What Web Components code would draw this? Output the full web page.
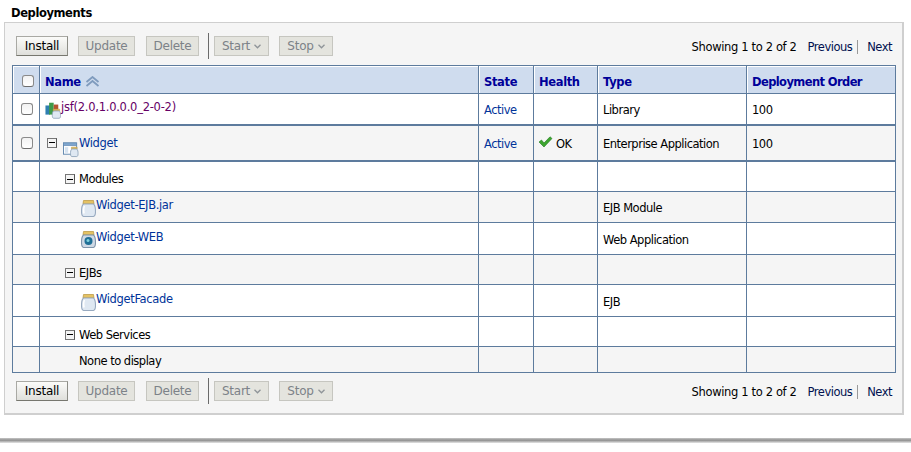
<!DOCTYPE html>
<html>
<head>
<meta charset="utf-8">
<style>
html, body { margin: 0; padding: 0; background: #fff; }
body { font: 12px "DejaVu Sans", sans-serif; color: #000; width: 911px; height: 452px; overflow: hidden; }
</style>
</head>
<body>
<deploy-page></deploy-page>

<script>
const JAR_LID = `<path d="M3 6.500 L3.500 3 H13.500 L14 6.500 Z" fill="#e4c264" stroke="#b8923a" stroke-width=".7"/>`;
const JAR_BODY = `M3.500 6.500 H13.500 C15.500 8 15.500 10 15.500 14 C15.500 17.500 14.500 19 13 19 H4 C2.500 19 1.500 17.500 1.500 14 C1.500 10 1.500 8 3.500 6.500 Z`;
const ICONS = {
    jar: `<svg width="15" height="17" viewBox="1 2.500 15 17">${JAR_LID}<path d="${JAR_BODY}" fill="#dfe8f2" stroke="#98aac0" stroke-width="1.100"/><path d="M4.500 8.500 C3.500 10 3.500 13 4 16" fill="none" stroke="#fff" stroke-width="1.600"/></svg>`,
    web: `<svg width="15" height="17" viewBox="1 2.500 15 17">${JAR_LID}<path d="${JAR_BODY}" fill="#cfd9e5" stroke="#7f94ab" stroke-width="1.100"/><circle cx="8.500" cy="12.500" r="4" fill="#1f6f96"/><circle cx="8" cy="12" r="1.500" fill="#7fd0dd"/></svg>`,
    lib: `<svg width="16" height="17" viewBox="0.500 3.500 17.500 18"><rect x="1" y="7" width="5" height="10" fill="#2f7fb0"/><rect x="5" y="4" width="5" height="13" fill="#3f9a4a"/><rect x="10" y="6" width="5" height="11" fill="#b5532f"/><path d="M9.500 11 H16.500 V13 H9.500 Z" fill="#e4c264" stroke="#b8923a" stroke-width=".5"/><path d="M10 13 H16 C17.500 14 17.500 16 17.500 18 C17.500 20 17 21 16 21 H10 C9 21 8.500 20 8.500 18 C8.500 16 8.500 14 10 13 Z" fill="#dfe8f2" stroke="#8da2b8" stroke-width=".9"/></svg>`,
    app: `<svg width="16" height="17" viewBox="1 4 17 17"><rect x="1.500" y="5.500" width="14" height="12" fill="#fff" stroke="#5f86ae"/><rect x="1.500" y="5.500" width="14" height="3" fill="#7fa6cf" stroke="#5f86ae" stroke-width=".6"/><rect x="3" y="10" width="3.500" height="6" fill="#d6e3f0"/><path d="M10 10 H16 V12 H10 Z" fill="#e4c264" stroke="#b8923a" stroke-width=".5"/><path d="M10.500 12 H15.500 C17 13 17 15 17 17 C17 19 16.500 20 15.500 20 H10.500 C9.500 20 9 19 9 17 C9 15 9 13 10.500 12 Z" fill="#dfe8f2" stroke="#8da2b8" stroke-width=".9"/></svg>`
};

class DeployButton extends HTMLElement {
    constructor() {
        super();
        this.attachShadow({ mode: 'open' });
    }
    connectedCallback() {
        const menu = this.hasAttribute('menu');
        this.shadowRoot.innerHTML = `
            <style>
                :host { display: inline-flex; }
                button {
                    box-sizing: border-box;
                    height: 20px;
                    width: ${this.getAttribute('width')}px;
                    padding: 0;
                    font: 12px "DejaVu Sans", sans-serif;
                    letter-spacing: -0.25px;
                    display: flex;
                    align-items: center;
                    justify-content: center;
                    gap: 4px;
                    color: #000;
                    background: linear-gradient(180deg, #fbfbf9 0%, #dfdfdb 100%);
                    border: 1px solid #a9a9a4;
                    border-bottom: 1px solid #77776f;
                    border-right-color: #8d8d86;
                }
                :host([disabled]) button {
                    color: #7c8288;
                    background: #e4e4de;
                    border: 1px solid #c6c6c0;
                }
            </style>
            <button type="button"><slot></slot>${menu ? `<svg width="7" height="5" viewBox="0 0 7 5"><path d="M.5 .8 L3.500 3.800 L6.500 .8" fill="none" stroke="#8f9498" stroke-width="1.300"/></svg>` : ''}</button>
        `;
    }
}

class DeployToolbar extends HTMLElement {
    constructor() {
        super();
        this.attachShadow({ mode: 'open' });
    }
    connectedCallback() {
        this.shadowRoot.innerHTML = `
            <style>
                :host { display: flex; align-items: center; height: 26px; }
                .buttons { display: flex; align-items: center; }
                deploy-button { margin-right: 10px; }
                .wide { margin-right: 11px; }
                .last { margin-right: 9px; }
                .sep { width: 1px; height: 26px; background: #6b6b6b; margin-right: 5px; }
                .paging {
                    margin-left: auto;
                    display: flex;
                    align-items: baseline;
                    font-size: 11.500px;
                    letter-spacing: -0.35px;
                    color: #000;
                    padding-right: 2px;
                    padding-top: 1px;
                }
                .prev { margin-left: 11px; color: #00114f; padding-right: 5px; border-right: 1px solid #999; letter-spacing: -0.5px; }
                .next { margin-left: 9px; color: #00114f; letter-spacing: -0.5px; }
            </style>
            <div class="buttons">
                <deploy-button width="52">Install</deploy-button>
                <deploy-button class="wide" width="57" disabled>Update</deploy-button>
                <deploy-button class="last" width="53" disabled>Delete</deploy-button>
                <div class="sep"></div>
                <deploy-button width="55" disabled menu>Start</deploy-button>
                <deploy-button width="54" disabled menu>Stop</deploy-button>
            </div>
            <div class="paging">
                <span>Showing 1 to 2 of 2</span>
                <span class="prev">Previous</span>
                <span class="next">Next</span>
            </div>
        `;
    }
}

class DeployTable extends HTMLElement {
    constructor() {
        super();
        this.attachShadow({ mode: 'open' });
    }
    row(r) {
        const check = r.check ? `<span class="check"></span>` : '';
        const toggle = r.toggle ? `<span class="toggle"></span>` : '';
        const icon = r.icon ? `<span class="icon ${r.icon}">${ICONS[r.icon]}</span>` : '';
        const label = r.link
            ? `<a class="${r.visited ? 'visited' : ''}">${r.name}</a>`
            : `<span>${r.name}</span>`;
        const health = r.health
            ? `<span class="health"><svg width="15" height="12" viewBox="0 0 15 12"><path d="M1 6 L3.500 4 L6 7 L12 .8 L14 2.500 L6 11 Z" fill="#3da52f" stroke="#1f7a1f" stroke-width=".6"/></svg>${r.health}</span>`
            : '';
        return `<tr class="${r.cls}" style="height:${r.h}px">
            <td class="c">${check}</td>
            <td><div class="name" style="padding-left:${r.indent}px">${toggle}${icon}${label}</div></td>
            <td>${r.state ? `<a>${r.state}</a>` : ''}</td>
            <td>${health}</td>
            <td>${r.type || ''}</td>
            <td>${r.order || ''}</td>
        </tr>`;
    }
    connectedCallback() {
        const rows = [
            { cls: 'w', h: 31, check: 1, icon: 'lib', indent: 5, name: 'jsf(2.0,1.0.0.0_2-0-2)', link: 1, visited: 1, state: 'Active', type: 'Library', order: '100' },
            { cls: 'g top widget', h: 36, check: 1, toggle: 1, icon: 'app', indent: 7, name: 'Widget', link: 1, state: 'Active', health: 'OK', type: 'Enterprise Application', order: '100' },
            { cls: 'w top low', h: 31, toggle: 1, indent: 25, name: 'Modules' },
            { cls: 'g', h: 31, icon: 'jar', indent: 41, name: 'Widget-EJB.jar', link: 1, type: 'EJB Module' },
            { cls: 'w', h: 32, icon: 'web', indent: 41, name: 'Widget-WEB', link: 1, type: 'Web Application' },
            { cls: 'g low', h: 30, toggle: 1, indent: 25, name: 'EJBs' },
            { cls: 'w', h: 32, icon: 'jar', indent: 41, name: 'WidgetFacade', link: 1, type: 'EJB' },
            { cls: 'w low', h: 30, toggle: 1, indent: 25, name: 'Web Services' },
            { cls: 'g', h: 26, indent: 39, name: 'None to display' }
        ];
        this.shadowRoot.innerHTML = `
            <style>
                :host { display: block; }
                table {
                    border-collapse: collapse;
                    table-layout: fixed;
                    width: 884px;
                    font-size: 11.500px;
                    letter-spacing: -0.5px;
                    color: #000;
                }
                th, td { border: 1px solid #5d7b9d; padding: 2px 0 0 5px; text-align: left; vertical-align: middle; overflow: hidden; white-space: nowrap; }
                th {
                    height: 28px;
                    box-sizing: border-box;
                    padding-top: 4px;
                    background: #cfdcee;
                    box-shadow: inset 1px 1px 0 #fff;
                    color: #000099;
                    font-size: 11.500px;
                    font-weight: bold;
                    letter-spacing: -0.35px;
                }
                th.order { letter-spacing: -0.6px; }
                td.c { padding: 0; }
                th.c { padding: 2px 0 0 0; }
                .w td { background: #fff; }
                .g td { background: #f5f5f5; }
                .top td { border-top: 2px solid #5d7b9d; }
                .low td { padding-top: 6px; }
                a { color: #003399; }
                a.visited { color: #660066; }
                .check {
                    display: block;
                    box-sizing: border-box;
                    width: 12px;
                    height: 12px;
                    margin-left: 8px;
                    border: 1px solid #8a8a8a;
                    border-bottom-color: #6d6d6d;
                    border-radius: 3px;
                    background: linear-gradient(180deg, #f2f2f2, #fff);
                }
                .name { display: flex; align-items: center; margin-left: -5px; }
                .name a { margin-bottom: 6px; letter-spacing: -0.35px; }
                .name a.visited { letter-spacing: -0.25px; }
                .widget .name a { margin-bottom: 2px; }
                .widget .toggle { margin-bottom: 2px; }
                .toggle {
                    box-sizing: border-box;
                    width: 10px;
                    height: 10px;
                    border: 1px solid #777;
                    border-right-color: #555;
                    background: linear-gradient(#000, #000) center / 6px 1px no-repeat, #f4f4f4;
                    margin-right: 4px;
                    flex: none;
                }
                .icon { flex: none; display: flex; height: 22px; align-items: flex-end; margin-bottom: 4px; }
                .icon.web { margin-bottom: 6px; }
                .icon.app { margin: 6px 0 0 2px; }
                .health { display: flex; align-items: center; gap: 3px; margin-left: -1px; }
                .health svg { margin-bottom: 4px; }
                .sort { vertical-align: -1px; margin-left: 4px; }
            </style>
            <table>
                <colgroup><col style="width:27px"><col style="width:439px"><col style="width:55px"><col style="width:64px"><col style="width:149px"><col style="width:149px"></colgroup>
                <thead><tr>
                    <th class="c"><span class="check" style="margin-left:9px"></span></th>
                    <th>Name<svg class="sort" width="15" height="11" viewBox="0 0 15 11"><path d="M1.500 6 L7.500 1 L13.500 6 M1.500 10 L7.500 5 L13.500 10" fill="none" stroke="#7f9bbd" stroke-width="1.800"/></svg></th>
                    <th>State</th><th>Health</th><th>Type</th><th class="order">Deployment Order</th>
                </tr></thead>
                <tbody>${rows.map(r => this.row(r)).join('')}</tbody>
            </table>
        `;
    }
}

class DeployPage extends HTMLElement {
    constructor() {
        super();
        this.attachShadow({ mode: 'open' });
    }
    connectedCallback() {
        this.shadowRoot.innerHTML = `
            <style>
                :host { display: block; font: 12px "DejaVu Sans", sans-serif; }
                h1 { margin: 0; padding: 6px 0 0 11px; height: 16px; font-size: 11.500px; line-height: 15px; font-weight: bold; letter-spacing: -0.4px; }
                .panel {
                    box-sizing: border-box;
                    width: 900px;
                    height: 393px;
                    margin-left: 4px;
                    border: 1px solid #cfcfcf;
                    border-width: 1px 2px 2px 1px;
                    background: #f5f5f5;
                    padding: 10px 0 0 7px;
                }
                .panel deploy-toolbar { padding-left: 4px; width: 878px; }
                deploy-table { margin-top: 6px; }
                .bottom { margin-top: 5px; }
                .rule {
                    height: 5px;
                    margin-top: 23px;
                    background: linear-gradient(180deg, #c6c6c6, #8f8f8f 45%, #e6e6e6);
                }
            </style>
            <h1>Deployments</h1>
            <div class="panel">
                <deploy-toolbar></deploy-toolbar>
                <deploy-table></deploy-table>
                <deploy-toolbar class="bottom"></deploy-toolbar>
            </div>
            <div class="rule"></div>
        `;
    }
}

customElements.define('deploy-button', DeployButton);
customElements.define('deploy-toolbar', DeployToolbar);
customElements.define('deploy-table', DeployTable);
customElements.define('deploy-page', DeployPage);
</script>
</body>
</html>
